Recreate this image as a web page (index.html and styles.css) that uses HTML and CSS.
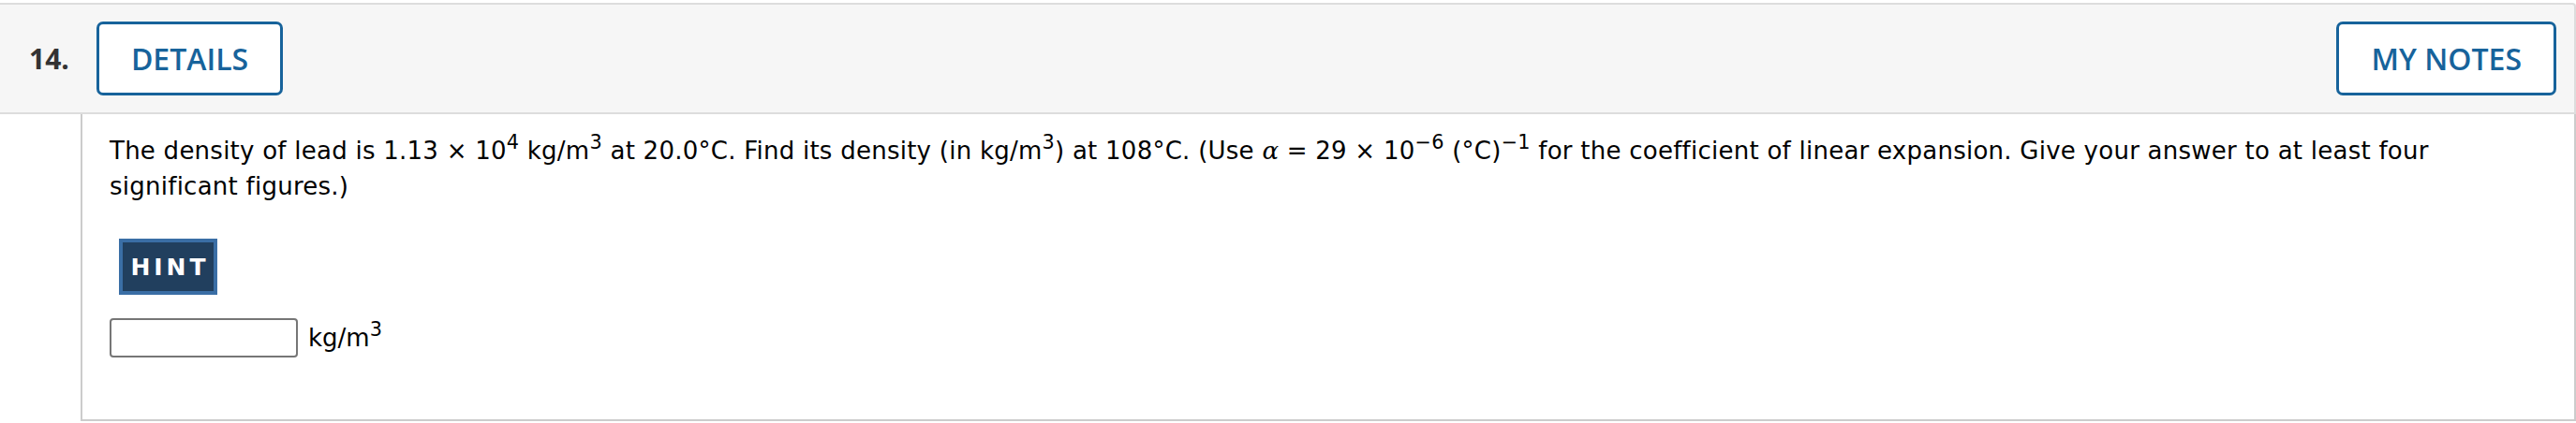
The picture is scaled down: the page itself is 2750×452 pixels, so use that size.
FILE: index.html
```html
<!DOCTYPE html>
<html lang="en">
<head>
<meta charset="utf-8">
<title>Question 14</title>
<link rel="stylesheet" href="styles.css">
</head>
<body>
<div class="question">
  <div class="q-header">
    <div class="q-left">
      <span class="q-num">14.</span>
      <button class="q-btn">DETAILS</button>
    </div>
    <button class="q-btn">MY NOTES</button>
  </div>
  <div class="q-body">
    <p class="q-text">The density of lead is 1.13 × 10<sup>4</sup> kg/m<sup>3</sup> at 20.0°C. Find its density (in kg/m<sup>3</sup>) at 108°C. (Use <span class="math">α</span> = 29 × 10<sup>−6</sup> (°C)<sup>−1</sup> for the coefficient of linear expansion. Give your answer to at least four<br>significant figures.)</p>
    <div class="hint-row"><button class="hint">HINT</button></div>
    <div class="answer-row">
      <input class="answer" type="text">
      <span class="unit">kg/m<sup>3</sup></span>
    </div>
  </div>
</div>
</body>
</html>
```
FILE: styles.css
```css
html, body {
  margin: 0;
  padding: 0;
  background: #ffffff;
}

.question {
  padding-top: 3px;
}

.q-header {
  display: flex;
  align-items: center;
  justify-content: space-between;
  background: #f6f6f6;
  border-top: 2px solid #dddddd;
  border-bottom: 2px solid #dddddd;
  border-right: 2px solid #dddddd;
  border-top-right-radius: 4px;
  padding: 18px 19px 18px 31px;
}

.q-left {
  display: flex;
  align-items: center;
  gap: 29px;
}

.q-num {
  font-family: "Open Sans", "Liberation Sans", sans-serif;
  font-weight: 700;
  font-size: 30px;
  color: #333333;
}

.q-btn {
  font-family: "Open Sans", "Liberation Sans", sans-serif;
  font-size: 32px;
  font-weight: 600;
  color: #17639b;
  background: #ffffff;
  border: 3px solid #17639b;
  border-radius: 7px;
  height: 79px;
  padding: 0 34px;
  line-height: 1;
  cursor: pointer;
}

.q-body {
  margin-left: 86px;
  border-left: 2px solid #cccccc;
  border-right: 2px solid #cccccc;
  border-bottom: 2px solid #cccccc;
  padding: 20px 29px 66px 29px;
  font-family: "DejaVu Sans", Verdana, sans-serif;
  font-size: 26px;
  color: #000000;
}

.q-text {
  margin: 0;
  line-height: 38px;
  letter-spacing: 0.25px;
}

sup {
  font-size: 0.8em;
  line-height: 0;
  vertical-align: 0.55em;
}

.math {
  font-family: "DejaVu Serif", "Liberation Serif", serif;
  font-style: italic;
}

.hint-row {
  margin-top: 37px;
  padding-left: 10px;
}

.hint {
  display: block;
  font-family: "DejaVu Sans", Verdana, sans-serif;
  font-weight: 700;
  font-size: 25px;
  letter-spacing: 4px;
  color: #ffffff;
  background: #213f5e;
  border: 4px solid #3a6ea5;
  border-radius: 0;
  width: 105px;
  height: 60px;
  padding: 0 0 0 4px;
  text-align: center;
}

.answer-row {
  display: flex;
  align-items: center;
  gap: 11px;
  margin-top: 25px;
}

.answer {
  width: 201px;
  height: 42px;
  box-sizing: border-box;
  border: 2px solid #767676;
  border-radius: 4px;
  margin: 0;
  padding: 0 6px;
  font-size: 26px;
}

.unit {
  line-height: 38px;
}
```
